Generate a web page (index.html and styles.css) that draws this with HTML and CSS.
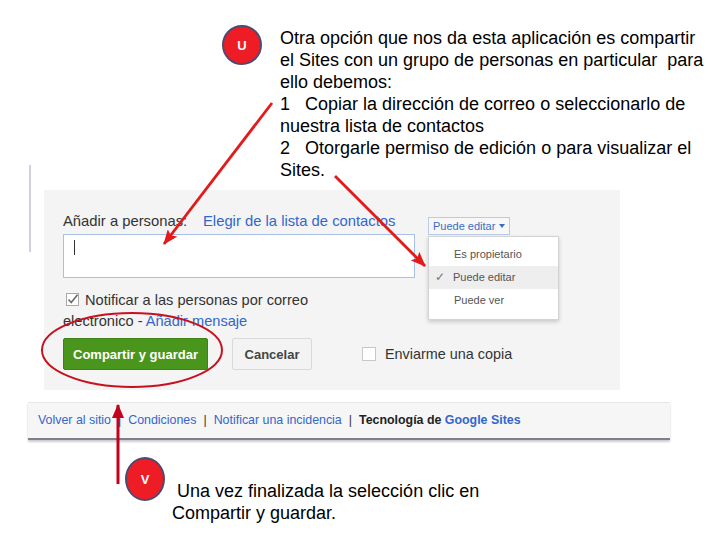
FILE: index.html
```html
<!DOCTYPE html>
<html lang="es">
<head>
<meta charset="utf-8">
<title>Compartir Sites</title>
<link rel="stylesheet" href="styles.css">
</head>
<body>
<div class="page">
  <section class="note note-u">
    <div class="badge">U</div>
    <p class="note-text">Otra opción que nos da esta aplicación es compartir<br>el Sites con un grupo de personas en particular&nbsp; para<br>ello debemos:<br>1&nbsp;&nbsp;&nbsp;Copiar la dirección de correo o seleccionarlo de<br>nuestra lista de contactos<br>2&nbsp;&nbsp;&nbsp;Otorgarle permiso de edición o para visualizar el<br>Sites.</p>
  </section>

  <section class="shot">
    <div class="rule"></div>
    <div class="panel">
      <div class="panel-top">
        <div class="add-col">
          <div class="add-row"><span class="add-label">Añadir a personas:</span><span class="link">Elegir de la lista de contactos</span></div>
          <div class="input"><span class="caret"></span></div>
        </div>
        <div class="perm-col">
          <div class="perm-btn">Puede editar <span class="tri"></span></div>
          <ul class="menu">
            <li>Es propietario</li>
            <li class="sel"><span class="check">&#10003;</span>Puede editar</li>
            <li>Puede ver</li>
          </ul>
        </div>
      </div>
      <p class="notify"><svg class="cb" width="13" height="13" viewBox="0 0 13 13"><rect x="0.5" y="0.5" width="12" height="12" fill="#fff" stroke="#a9a9a9"/><path d="M2.5 6.5 L5.2 9.5 L11.5 1.8" fill="none" stroke="#6b6b6b" stroke-width="1.6"/></svg>Notificar a las personas por correo<br>electronico - <span class="link">Añadir mensaje</span></p>
      <div class="actions">
        <div class="btn-primary">Compartir y guardar</div>
        <div class="btn">Cancelar</div>
        <div class="copy"><span class="box"></span>Enviarme una copia</div>
      </div>
    </div>
  </section>

  <footer class="footer">
    <span class="link">Volver al sitio</span><span class="sep">|</span><span class="link">Condiciones</span><span class="sep">|</span><span class="link">Notificar una incidencia</span><span class="sep">|</span><b>Tecnología de <span class="link">Google Sites</span></b>
  </footer>

  <section class="note note-v">
    <div class="badge badge-v">V</div>
    <p class="note-text">&nbsp;Una vez finalizada la selección clic en<br>Compartir y guardar.</p>
  </section>

  <svg class="overlay" width="728" height="546" viewBox="0 0 728 546">
    <defs>
      <marker id="ah" markerWidth="15" markerHeight="12" refX="14" refY="6" orient="auto" markerUnits="userSpaceOnUse">
        <path d="M0,0 L15,6 L0,12 L3,6 z" fill="#e21a1a"/>
      </marker>
      <marker id="ah2" markerWidth="14" markerHeight="12" refX="13" refY="6" orient="auto" markerUnits="userSpaceOnUse">
        <path d="M0,0 L14,6 L0,12 z" fill="#c4001c"/>
      </marker>
    </defs>
    <line x1="272" y1="103" x2="164" y2="244" stroke="#e21a1a" stroke-width="2.8" marker-end="url(#ah)"/>
    <line x1="335" y1="176" x2="425" y2="266" stroke="#e21a1a" stroke-width="2.8" marker-end="url(#ah)"/>
    <ellipse cx="132" cy="350" rx="90" ry="37" fill="none" stroke="#c8101e" stroke-width="2"/>
    <line x1="118" y1="484" x2="118" y2="405" stroke="#c4001c" stroke-width="3" marker-end="url(#ah2)"/>
  </svg>
</div>
</body>
</html>
```

FILE: styles.css
```css
* {
  box-sizing: border-box;
  margin: 0;
  padding: 0;
}

html,
body {
  width: 728px;
  height: 546px;
}

body {
  background: #fff;
  font-family: "Liberation Sans", Arial, sans-serif;
  color: #000;
  overflow: hidden;
}

.page {
  position: relative;
  width: 728px;
  height: 546px;
}

/* annotation notes */
.note {
  display: flex;
  align-items: flex-start;
}

.note-text {
  font-size: 18px;
  line-height: 22px;
  white-space: nowrap;
  color: #000;
}

.badge {
  flex: none;
  width: 40px;
  height: 40px;
  border-radius: 50%;
  background: #ee1c24;
  border: 2px solid #504a70;
  color: #fff;
  font-weight: bold;
  font-size: 13px;
  display: flex;
  align-items: center;
  justify-content: center;
}

.note-u {
  height: 165px;
  padding: 25px 0 0 222px;
}

.note-u .note-text {
  margin-left: 18px;
  margin-top: 2px;
}

.note-v {
  margin-top: 17px;
  padding-left: 125px;
}

.badge-v {
  height: 44px;
}

.note-v .note-text {
  margin-left: 7px;
  margin-top: 23px;
}

/* screenshot */
.shot {
  display: flex;
  align-items: flex-start;
  height: 225px;
}

.rule {
  width: 2px;
  height: 87px;
  margin-left: 29px;
  background: #cfd2dc;
}

.panel {
  width: 576px;
  height: 200px;
  margin: 25px 0 0 13px;
  padding: 22px 0 0 19px;
  background: #f4f4f4;
  color: #333;
}

.link {
  color: #3366cc;
}

.panel-top {
  display: flex;
  align-items: flex-start;
}

.add-col {
  width: 352px;
}

.add-row {
  display: flex;
  height: 18px;
  line-height: 18px;
  font-size: 14.8px;
  margin-bottom: 4px;
}

.add-label {
  width: 140px;
}

.input {
  height: 44px;
  background: #fff;
  border: 1px solid #a9c0e6;
  padding: 5px 0 0 10px;
}

.caret {
  display: block;
  width: 1px;
  height: 15px;
  background: #333;
}

.perm-col {
  position: relative;
  margin-left: 13px;
  padding-top: 5px;
}

.perm-btn {
  width: 82px;
  height: 18px;
  padding-left: 4px;
  border: 1px solid #b8cbea;
  background: #f7f7f7;
  color: #3a6cc4;
  font-size: 11px;
  line-height: 16px;
}

.tri {
  display: inline-block;
  width: 0;
  height: 0;
  margin-left: 1px;
  vertical-align: 2px;
  border-left: 3.5px solid transparent;
  border-right: 3.5px solid transparent;
  border-top: 4px solid #3a6cc4;
}

.menu {
  position: absolute;
  top: 24px;
  left: 0;
  width: 131px;
  padding: 6px 0 7px;
  list-style: none;
  background: #fff;
  border: 1px solid #d3d3d3;
  box-shadow: 0 2px 4px rgba(0, 0, 0, 0.18);
  font-size: 11px;
  color: #555;
}

.menu li {
  height: 23px;
  line-height: 23px;
  padding-left: 25px;
}

.menu li.sel {
  background: #eeeeee;
}

.check {
  display: inline-block;
  width: 18px;
  margin-left: -19px;
  color: #777;
  font-size: 12px;
}

.notify {
  margin-top: 12px;
  font-size: 14.6px;
  line-height: 21px;
}

.cb {
  display: inline-block;
  vertical-align: -1px;
  margin: 0 6px 0 3px;
}

.actions {
  display: flex;
  align-items: center;
  margin-top: 6px;
}

.btn-primary {
  width: 145px;
  height: 32px;
  display: flex;
  align-items: center;
  justify-content: center;
  background: #4a951b;
  border: 1px solid #3e8316;
  border-radius: 2px;
  color: #fff;
  font-weight: bold;
  font-size: 13px;
}

.btn {
  width: 80px;
  height: 32px;
  margin-left: 24px;
  display: flex;
  align-items: center;
  justify-content: center;
  background: #f3f3f3;
  border: 1px solid #dadada;
  border-radius: 2px;
  color: #444;
  font-weight: bold;
  font-size: 13px;
}

.copy {
  display: flex;
  align-items: center;
  margin-left: 50px;
  font-size: 14.4px;
}

.box {
  width: 14px;
  height: 14px;
  margin-right: 9px;
  background: #fff;
  border: 1px solid #c8c8c8;
}

/* footer of the screenshot */
.footer {
  width: 642px;
  height: 38px;
  margin: 12px 0 0 28px;
  padding-left: 10px;
  background: #f6f6f6;
  border-top: 1px solid #e6e6e6;
  border-bottom: 2px solid #808080;
  box-shadow: 0 2px 2px #c9ccd6;
  font-size: 12.4px;
  line-height: 35px;
  color: #333;
  white-space: nowrap;
}

.sep {
  margin: 0 7px;
  color: #333;
}

.footer b {
  color: #222;
}

.overlay {
  position: absolute;
  top: 0;
  left: 0;
  pointer-events: none;
}
```
